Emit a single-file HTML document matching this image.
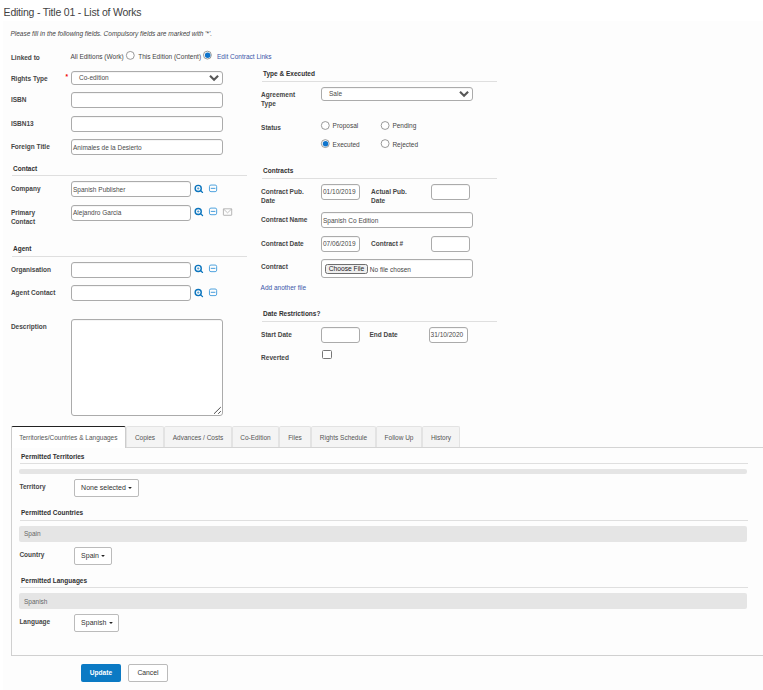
<!DOCTYPE html>
<html lang="en"><head><meta charset="utf-8"><title>Editing - Title 01 - List of Works</title>
<style>
*{box-sizing:border-box;margin:0;padding:0}
html,body{width:763px;height:690px;overflow:hidden;background:#fff}
body{position:relative;font-family:"Liberation Sans",sans-serif;font-size:6.5px;color:#333;line-height:1}
.a{position:absolute;white-space:nowrap}
.panel{left:3px;top:21px;width:760px;height:669px;background:#fdfdfd}
h1{font-weight:normal;font-size:10.5px;letter-spacing:-0.215px;color:#424242;left:3.6px;top:6px;line-height:12px}
.l{font-weight:bold;color:#464646;line-height:9px}
.t{color:#444}
.it{color:#4a4a4a}
.bt{color:#666}
.lk{color:#3a55a8}
.in{border:0.6px solid #ababab;border-radius:3px;background:#fff;color:#555;box-shadow:inset 0 0.5px 0.5px rgba(0,0,0,.08)}
.hr{height:0.6px;background:#dfdfdf}
.hd{font-weight:bold;color:#303030}
.tab{top:426.3px;height:21.2px;border:0.6px solid #e3e3e3;border-bottom:none;border-radius:2px 2px 0 0;background:#f4f4f4;color:#555;line-height:21px;text-align:center}
.tab.on{background:#fff;border-color:#ccc;border-top:1px solid #222;height:21.8px;line-height:22.2px}
.bar{background:#e5e5e5;border-radius:2px;color:#666;line-height:15.4px;padding-left:5px}
.btn{border:0.6px solid #bbb;border-radius:2px;background:#fff;color:#333;font-size:7px;line-height:16.4px;padding-left:5.7px}
.caret{display:inline-block;width:4px;height:2px;vertical-align:1.1px;margin-left:2.4px}
</style></head>
<body>
<div class="a panel"></div>
<h1 class="a">Editing - Title 01 - List of Works</h1>
<svg class="a" style="left:124px;top:49px;width:12px;height:12px" viewBox="124 49 12 12"><circle cx="130.3" cy="55.4" r="3.95" fill="#fff" stroke="#888" stroke-width="0.85"/></svg>
<svg class="a" style="left:201px;top:49px;width:12px;height:12px" viewBox="201 49 12 12"><circle cx="207.4" cy="55.1" r="3.95" fill="#fff" stroke="#888" stroke-width="0.85"/><circle cx="207.65" cy="55.30" r="2.75" fill="#0f74cc"/></svg>
<svg class="a" style="left:319px;top:119px;width:12px;height:12px" viewBox="319 119 12 12"><circle cx="325.3" cy="125.5" r="3.95" fill="#fff" stroke="#888" stroke-width="0.85"/></svg>
<svg class="a" style="left:379px;top:119px;width:12px;height:12px" viewBox="379 119 12 12"><circle cx="385.1" cy="125.5" r="3.95" fill="#fff" stroke="#888" stroke-width="0.85"/></svg>
<svg class="a" style="left:319px;top:137px;width:12px;height:12px" viewBox="319 137 12 12"><circle cx="325.3" cy="143.6" r="3.95" fill="#fff" stroke="#888" stroke-width="0.85"/><circle cx="325.55" cy="143.80" r="2.75" fill="#0f74cc"/></svg>
<svg class="a" style="left:379px;top:137px;width:12px;height:12px" viewBox="379 137 12 12"><circle cx="385.1" cy="143.6" r="3.95" fill="#fff" stroke="#888" stroke-width="0.85"/></svg>
<div class="a t" style="left:10.4px;top:29.00px;line-height:9px;font-style:italic">Please fill in the following fields. Compulsory fields are marked with '*'.</div>
<div class="a l" style="left:10.9px;top:53.00px;line-height:9px;">Linked to</div>
<div class="a t" style="left:70.4px;top:52.00px;line-height:9px;">All Editions (Work)</div>
<div class="a t" style="left:138.2px;top:52.00px;line-height:9px;">This Edition (Content)</div>
<div class="a lk" style="left:217px;top:52.00px;line-height:9px;">Edit Contract Links</div>
<div class="a l" style="left:10.9px;top:74.00px;line-height:9px;">Rights Type</div>
<div class="a" style="left:65.6px;top:71.6px;color:#f00000;font-size:6.5px;font-weight:bold;line-height:9px">*</div>
<div class="a in" style="left:71.2px;top:71px;width:152.2px;height:14px;"></div>
<svg class="a" style="left:206px;top:69px;width:16px;height:16px" viewBox="206 69 16 16"><path d="M210.00 75.70 L214.05 79.75 L218.10 75.70" fill="none" stroke="#585858" stroke-width="2.1" stroke-linejoin="miter"/></svg>
<div class="a it" style="left:79px;top:73.00px;line-height:9px;">Co-edition</div>
<div class="a l" style="left:10.9px;top:95.00px;line-height:9px;">ISBN</div>
<div class="a in" style="left:71.2px;top:92.4px;width:152.2px;height:15.2px;"></div>
<div class="a l" style="left:10.9px;top:119.00px;line-height:9px;">ISBN13</div>
<div class="a in" style="left:71.2px;top:116.4px;width:152.2px;height:15.2px;"></div>
<div class="a l" style="left:10.9px;top:142.00px;line-height:9px;">Foreign Title</div>
<div class="a in" style="left:71.2px;top:139.4px;width:152.2px;height:15.2px;"></div>
<div class="a it" style="left:73px;top:143.00px;line-height:9px;">Animales de la Desierto</div>
<div class="a hd" style="left:13px;top:164.00px;line-height:9px;">Contact</div>
<div class="a hr" style="left:12px;top:175.4px;width:235px;height:0.6px;"></div>
<div class="a l" style="left:10.9px;top:184.00px;line-height:9px;">Company</div>
<div class="a in" style="left:71.2px;top:181.4px;width:120.2px;height:15.2px;"></div>
<div class="a it" style="left:73px;top:185.00px;line-height:9px;">Spanish Publisher</div>
<svg class="a" style="left:190px;top:180px;width:16px;height:16px" viewBox="190 180 16 16"><circle cx="198.2" cy="188.4" r="3.05" fill="none" stroke="#0b74bd" stroke-width="1.4"/><path d="M200.70 190.80 L202.55 192.45" stroke="#0b74bd" stroke-width="1.25" stroke-linecap="round"/><path d="M196.90 188.4 H199.50 M198.2 187.10 V189.70" stroke="#0b74bd" stroke-width="0.55"/></svg>
<svg class="a" style="left:205px;top:180px;width:16px;height:16px" viewBox="205 180 16 16"><rect x="209.45" y="185.05" width="7.2" height="6.6" rx="1.5" fill="none" stroke="#3092d8" stroke-width="0.85"/><path d="M210.75 188.35 H215.35" stroke="#3092d8" stroke-width="0.9"/></svg>
<div class="a l" style="left:10.9px;top:208.00px;line-height:9px;">Primary</div>
<div class="a l" style="left:10.9px;top:217.00px;line-height:9px;">Contact</div>
<div class="a in" style="left:71.2px;top:205.4px;width:120.2px;height:15.2px;"></div>
<div class="a it" style="left:73px;top:208.00px;line-height:9px;">Alejandro Garcia</div>
<svg class="a" style="left:190px;top:203px;width:16px;height:16px" viewBox="190 203 16 16"><circle cx="198.2" cy="211.5" r="3.05" fill="none" stroke="#0b74bd" stroke-width="1.4"/><path d="M200.70 213.90 L202.55 215.55" stroke="#0b74bd" stroke-width="1.25" stroke-linecap="round"/><path d="M196.90 211.5 H199.50 M198.2 210.20 V212.80" stroke="#0b74bd" stroke-width="0.55"/></svg>
<svg class="a" style="left:205px;top:203px;width:16px;height:16px" viewBox="205 203 16 16"><rect x="209.45" y="208.10" width="7.2" height="6.6" rx="1.5" fill="none" stroke="#3092d8" stroke-width="0.85"/><path d="M210.75 211.4 H215.35" stroke="#3092d8" stroke-width="0.9"/></svg>
<svg class="a" style="left:219px;top:204px;width:16px;height:16px" viewBox="219 204 16 16"><rect x="223.40" y="208.80" width="8.3" height="6.5" rx="0.4" fill="none" stroke="#9a9a9a" stroke-width="0.7"/><path d="M223.45 208.95 L227.55 212.85 L231.65 208.95" fill="none" stroke="#9a9a9a" stroke-width="0.6"/></svg>
<div class="a hd" style="left:13px;top:244.00px;line-height:9px;">Agent</div>
<div class="a hr" style="left:12px;top:256.2px;width:235px;height:0.6px;"></div>
<div class="a l" style="left:10.9px;top:265.00px;line-height:9px;">Organisation</div>
<div class="a in" style="left:71.2px;top:262.4px;width:120.2px;height:15.2px;"></div>
<svg class="a" style="left:190px;top:260px;width:16px;height:16px" viewBox="190 260 16 16"><circle cx="198.2" cy="268.4" r="3.05" fill="none" stroke="#0b74bd" stroke-width="1.4"/><path d="M200.70 270.80 L202.55 272.45" stroke="#0b74bd" stroke-width="1.25" stroke-linecap="round"/><path d="M196.90 268.4 H199.50 M198.2 267.10 V269.70" stroke="#0b74bd" stroke-width="0.55"/></svg>
<svg class="a" style="left:205px;top:260px;width:16px;height:16px" viewBox="205 260 16 16"><rect x="209.45" y="265.05" width="7.2" height="6.6" rx="1.5" fill="none" stroke="#3092d8" stroke-width="0.85"/><path d="M210.75 268.35 H215.35" stroke="#3092d8" stroke-width="0.9"/></svg>
<div class="a l" style="left:10.9px;top:288.00px;line-height:9px;">Agent Contact</div>
<div class="a in" style="left:71.2px;top:285.4px;width:120.2px;height:15.2px;"></div>
<svg class="a" style="left:190px;top:284px;width:16px;height:16px" viewBox="190 284 16 16"><circle cx="198.2" cy="292.6" r="3.05" fill="none" stroke="#0b74bd" stroke-width="1.4"/><path d="M200.70 295.00 L202.55 296.65" stroke="#0b74bd" stroke-width="1.25" stroke-linecap="round"/><path d="M196.90 292.6 H199.50 M198.2 291.30 V293.90" stroke="#0b74bd" stroke-width="0.55"/></svg>
<svg class="a" style="left:205px;top:284px;width:16px;height:16px" viewBox="205 284 16 16"><rect x="209.45" y="289.00" width="7.2" height="6.6" rx="1.5" fill="none" stroke="#3092d8" stroke-width="0.85"/><path d="M210.75 292.3 H215.35" stroke="#3092d8" stroke-width="0.9"/></svg>
<div class="a l" style="left:10.9px;top:322.00px;line-height:9px;">Description</div>
<div class="a in" style="left:71.2px;top:319.4px;width:152.2px;height:96.2px;"></div>
<svg class="a" style="left:210px;top:404px;width:12px;height:12px" viewBox="210 404 12 12"><path d="M214 413.8 L220.8 407.1 M218.2 413.8 L220.8 411.2" stroke="#444" stroke-width="0.95" fill="none"/></svg>
<div class="a hd" style="left:263px;top:69.00px;line-height:9px;">Type &amp; Executed</div>
<div class="a hr" style="left:262px;top:81px;width:235px;height:0.6px;"></div>
<div class="a l" style="left:261.1px;top:90.00px;line-height:9px;">Agreement</div>
<div class="a l" style="left:261.1px;top:99.00px;line-height:9px;">Type</div>
<div class="a in" style="left:321px;top:87px;width:152px;height:14px;"></div>
<svg class="a" style="left:456px;top:85px;width:16px;height:16px" viewBox="456 85 16 16"><path d="M460.00 91.70 L464.05 95.75 L468.10 91.70" fill="none" stroke="#585858" stroke-width="2.1" stroke-linejoin="miter"/></svg>
<div class="a it" style="left:329px;top:89.00px;line-height:9px;">Sale</div>
<div class="a l" style="left:261.1px;top:123.00px;line-height:9px;">Status</div>
<div class="a t" style="left:332.6px;top:121.00px;line-height:9px;">Proposal</div>
<div class="a t" style="left:392.4px;top:121.00px;line-height:9px;">Pending</div>
<div class="a t" style="left:332.6px;top:140.00px;line-height:9px;">Executed</div>
<div class="a t" style="left:392.4px;top:140.00px;line-height:9px;">Rejected</div>
<div class="a hd" style="left:263px;top:166.00px;line-height:9px;">Contracts</div>
<div class="a hr" style="left:262px;top:178.2px;width:235px;height:0.6px;"></div>
<div class="a l" style="left:261.1px;top:187.00px;line-height:9px;">Contract Pub.</div>
<div class="a l" style="left:261.1px;top:196.00px;line-height:9px;">Date</div>
<div class="a in" style="left:321px;top:184.4px;width:38.6px;height:15.2px;"></div>
<div class="a it" style="left:323px;top:187.00px;line-height:9px;">01/10/2019</div>
<div class="a l" style="left:371.1px;top:187.00px;line-height:9px;">Actual Pub.</div>
<div class="a l" style="left:371.1px;top:196.00px;line-height:9px;">Date</div>
<div class="a in" style="left:431.4px;top:184.4px;width:38.2px;height:15.2px;"></div>
<div class="a l" style="left:261.1px;top:215.00px;line-height:9px;">Contract Name</div>
<div class="a in" style="left:321px;top:212.4px;width:151.6px;height:15.2px;"></div>
<div class="a it" style="left:323px;top:216.00px;line-height:9px;">Spanish Co Edition</div>
<div class="a l" style="left:261.1px;top:239.00px;line-height:9px;">Contract Date</div>
<div class="a in" style="left:321px;top:236.4px;width:38.6px;height:15.2px;"></div>
<div class="a it" style="left:323px;top:239.00px;line-height:9px;">07/06/2019</div>
<div class="a l" style="left:371.1px;top:239.00px;line-height:9px;">Contract #</div>
<div class="a in" style="left:431.4px;top:236.4px;width:38.2px;height:15.2px;"></div>
<div class="a l" style="left:261.1px;top:262.00px;line-height:9px;">Contract</div>
<div class="a in" style="left:321px;top:259.4px;width:151.6px;height:18.2px;"><span class="a" style="left:3.2px;top:4px;width:42.6px;height:9.4px;border:0.7px solid #6e6e6e;border-radius:2.5px;background:#efefef;color:#222;font-size:6.7px;line-height:8px;text-align:center">Choose File</span><span class="a" style="left:47.8px;top:5px;font-size:6.5px;line-height:9px;color:#444">No file chosen</span></div>
<div class="a lk" style="left:260.6px;top:283.00px;line-height:9px;">Add another file</div>
<div class="a hd" style="left:263px;top:309.00px;line-height:9px;">Date Restrictions?</div>
<div class="a hr" style="left:262px;top:321px;width:235px;height:0.6px;"></div>
<div class="a l" style="left:261.1px;top:330.00px;line-height:9px;">Start Date</div>
<div class="a in" style="left:321px;top:327.4px;width:38.6px;height:15.2px;"></div>
<div class="a l" style="left:369.5px;top:330.00px;line-height:9px;">End Date</div>
<div class="a in" style="left:429.4px;top:327.4px;width:38.2px;height:15.2px;"></div>
<div class="a it" style="left:430.6px;top:330.00px;line-height:9px;">31/10/2020</div>
<div class="a l" style="left:261.1px;top:353.00px;line-height:9px;">Reverted</div>
<div class="a " style="left:322px;top:350.4px;width:9.8px;height:8.6px;border:0.6px solid #777;border-radius:1.5px;background:#fff"></div>
<div class="a " style="left:11.5px;top:447px;width:751.5px;height:0.7px;background:#d4d4d4"></div>
<div class="a " style="left:11.1px;top:447px;width:0.7px;height:208.6px;background:#d0d0d0"></div>
<div class="a " style="left:11.5px;top:655px;width:751.5px;height:0.8px;background:#d0d0d0"></div>
<div class="a tab on" style="left:11.1px;top:425.8px;width:114.5px">Territories/Countries &amp; Languages</div>
<div class="a tab" style="left:126px;width:38.0px">Copies</div>
<div class="a tab" style="left:164px;width:68.0px">Advances / Costs</div>
<div class="a tab" style="left:232px;width:47.0px">Co-Edition</div>
<div class="a tab" style="left:279px;width:32.0px">Files</div>
<div class="a tab" style="left:311px;width:65.0px">Rights Schedule</div>
<div class="a tab" style="left:376px;width:46.0px">Follow Up</div>
<div class="a tab" style="left:422px;width:38.0px">History</div>
<div class="a hd" style="left:21px;top:452.00px;line-height:9px;">Permitted Territories</div>
<div class="a hr" style="left:20px;top:463.2px;width:728px;height:0.6px;"></div>
<div class="a bar" style="left:19px;top:469.2px;width:728px;height:4.8px;"></div>
<div class="a l" style="left:19.4px;top:482.00px;line-height:9px;">Territory</div>
<div class="a btn" style="left:74.4px;top:479px;width:64.4px;height:18px;">None selected<svg class="caret" viewBox="0 0 34 18"><path d="M0 0H34L17 18Z" fill="#222"/></svg></div>
<div class="a hd" style="left:21px;top:508.00px;line-height:9px;">Permitted Countries</div>
<div class="a hr" style="left:20px;top:520.2px;width:728px;height:0.6px;"></div>
<div class="a bar" style="left:19px;top:526.2px;width:728px;height:15.4px;"></div>
<div class="a bt" style="left:24px;top:529.00px;line-height:9px;">Spain</div>
<div class="a l" style="left:19.4px;top:550.00px;line-height:9px;">Country</div>
<div class="a btn" style="left:74.4px;top:547px;width:37.2px;height:18px;">Spain<svg class="caret" viewBox="0 0 34 18"><path d="M0 0H34L17 18Z" fill="#222"/></svg></div>
<div class="a hd" style="left:21px;top:576.00px;line-height:9px;">Permitted Languages</div>
<div class="a hr" style="left:20px;top:587px;width:728px;height:0.6px;"></div>
<div class="a bar" style="left:19px;top:593.3px;width:728px;height:15.6px;"></div>
<div class="a bt" style="left:24px;top:597.00px;line-height:9px;">Spanish</div>
<div class="a l" style="left:19.4px;top:617.00px;line-height:9px;">Language</div>
<div class="a btn" style="left:74.4px;top:614px;width:44.2px;height:18px;">Spanish<svg class="caret" viewBox="0 0 34 18"><path d="M0 0H34L17 18Z" fill="#222"/></svg></div>
<div class="a " style="left:81px;top:664.2px;width:39.8px;height:17.6px;background:#0b7ac4;border-radius:2px;color:#fff;font-weight:bold;text-align:center;line-height:17.4px;font-size:6.6px">Update</div>
<div class="a " style="left:128.2px;top:664.2px;width:39.6px;height:17.5px;background:#fff;border:0.6px solid #bbb;border-radius:2px;color:#333;text-align:center;line-height:16.6px;font-size:6.8px">Cancel</div>
</body></html>
